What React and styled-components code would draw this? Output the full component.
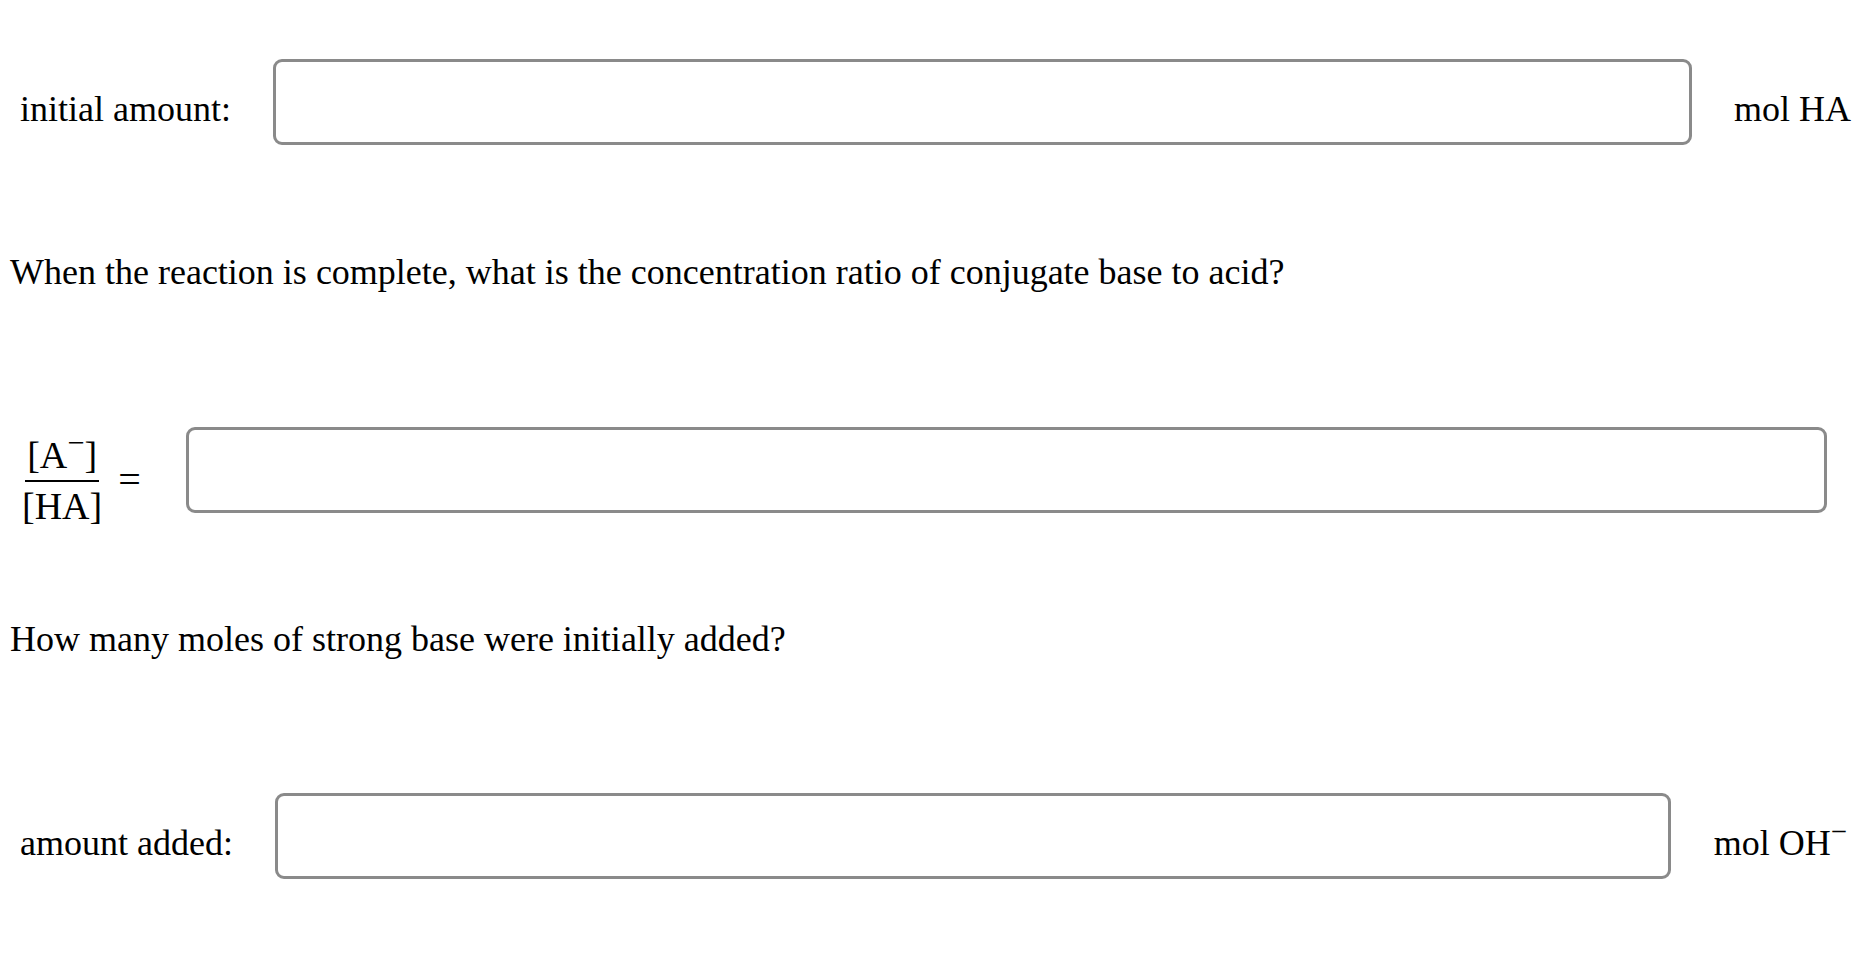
import React from 'react'
import styled, { createGlobalStyle } from 'styled-components'

const GlobalStyle = createGlobalStyle`
  html, body {
    margin: 0;
    padding: 0;
    background: #ffffff;
  }
  body {
    font-family: 'Liberation Serif', 'Times New Roman', serif;
    font-size: 36px;
    color: #000000;
  }
`

const Page = styled.div`
  display: flex;
  flex-direction: column;
  width: 1872px;
`

const AnswerRow = styled.div`
  display: flex;
  align-items: center;
  height: 86px;
  margin-top: ${p => p.top}px;
  padding-left: ${p => p.left}px;
  padding-right: ${p => p.right}px;
`

const Label = styled.span`
  padding-top: 13px;
  width: ${p => p.width}px;
  flex: none;
  white-space: nowrap;
`

const Unit = styled.span`
  padding-top: 13px;
  flex: none;
  white-space: nowrap;
  margin-left: ${p => p.gap}px;
`

const Field = styled.input`
  flex: 1;
  min-width: 0;
  height: 86px;
  box-sizing: border-box;
  border: 3px solid #8a8a8a;
  border-radius: 9px;
  background: #ffffff;
  font: inherit;
  padding: 0 12px;
  outline: none;
`

const Question = styled.p`
  margin: ${p => p.top}px 0 0 10px;
  line-height: normal;
`

const Fraction = styled.span`
  display: inline-flex;
  flex-direction: column;
  align-items: center;
  flex: none;
  font-size: 38px;
  line-height: 1;
  padding-top: 20px;
`

const Numerator = styled.span`
  padding: 0 2px 6px;
  border-bottom: 2px solid #000000;
`

const Denominator = styled.span`
  padding-top: 5px;
`

const Sup = styled.sup`
  font-size: 0.8em;
  line-height: 0;
  vertical-align: 0.5em;
`

const Equals = styled.span`
  flex: none;
  font-size: 40px;
  margin: 18px 45px 0 16px;
`

export default function App() {
  return (
    <Page>
      <GlobalStyle />
      <AnswerRow top={59} left={20} right={21}>
        <Label width={253}>initial amount:</Label>
        <Field type="text" />
        <Unit gap={42}>mol HA</Unit>
      </AnswerRow>

      <Question top={106}>
        When the reaction is complete, what is the concentration ratio of conjugate base to acid?
      </Question>

      <AnswerRow top={134} left={22} right={45}>
        <Fraction>
          <Numerator>[A<Sup>−</Sup>]</Numerator>
          <Denominator>[HA]</Denominator>
        </Fraction>
        <Equals>=</Equals>
        <Field type="text" />
      </AnswerRow>

      <Question top={105}>How many moles of strong base were initially added?</Question>

      <AnswerRow top={133} left={20} right={25}>
        <Label width={255}>amount added:</Label>
        <Field type="text" />
        <Unit gap={43}>
          mol OH<Sup>−</Sup>
        </Unit>
      </AnswerRow>
    </Page>
  )
}
